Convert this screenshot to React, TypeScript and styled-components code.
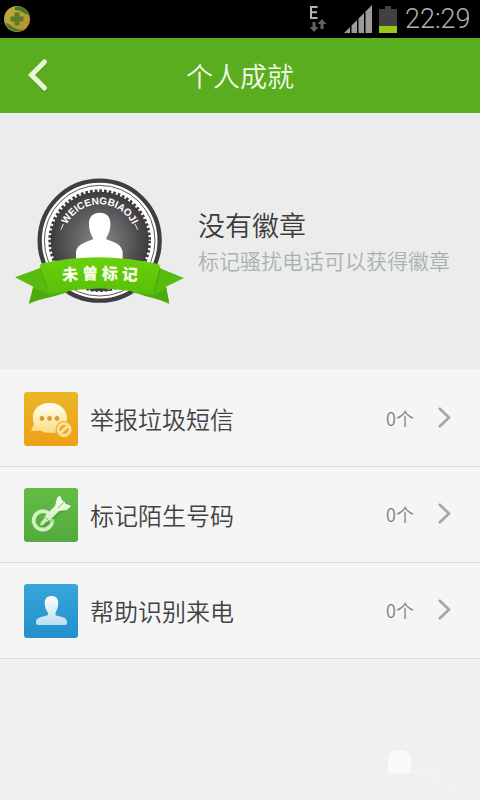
import React from "react";
import styled, { createGlobalStyle } from "styled-components";

const GlobalStyle = createGlobalStyle`
  *, *::before, *::after { box-sizing: border-box; }
  body {
    margin: 0;
    background: #f0f0f0;
    font-family: "Noto Sans CJK SC", sans-serif;
  }
  h1, h2, p, ul { margin: 0; padding: 0; font-weight: 400; }
  button, a { font: inherit; }
  svg { display: block; flex: none; }
`;

const Page = styled.div`
  min-height: 100vh;
  display: flex;
  flex-direction: column;
`;

const StatusBar = styled.div`
  height: 38px;
  padding: 0 9px 0 4px;
  display: flex;
  align-items: center;
  background: #000;
`;

const StatusIcons = styled.div`
  margin-left: auto;
  display: flex;
  align-items: center;
`;

const SignalGroup = styled.div`
  margin-left: 17px;
  display: flex;
  gap: 7px;
`;

const Clock = styled.time`
  width: 66px;
  margin-left: 8px;
  color: #b0b0b0;
  font: 300 27px/38px Roboto, sans-serif;
  white-space: nowrap;
`;

const Header = styled.header`
  height: 75px;
  padding: 0 16px;
  display: grid;
  grid-template-columns: 44px 1fr 44px;
  align-items: center;
  background: #5aad1e;
`;

const BackButton = styled.button`
  height: 44px;
  padding: 0 0 2px;
  display: flex;
  align-items: center;
  justify-content: center;
  border: 0;
  background: none;
  cursor: pointer;
`;

const Title = styled.h1`
  color: #f3fbe9;
  font-size: 27px;
  font-weight: 350;
  line-height: 40px;
  text-align: center;
`;

const Hero = styled.section`
  height: 257px;
  padding: 0 14px 2px 15px;
  display: flex;
  align-items: center;
  gap: 13px;
  background: #ececec;
`;

const HeroText = styled.div`
  flex: 1;
`;

const HeroTitle = styled.h2`
  color: #3c3c3c;
  font-size: 27px;
  font-weight: 350;
  line-height: 38px;
`;

const HeroHint = styled.p`
  color: #a9b2b3;
  font-size: 21px;
  font-weight: 350;
  line-height: 32px;
  white-space: nowrap;
`;

const List = styled.ul`
  list-style: none;
  border-top: 1px solid #fff;
`;

const Item = styled.li`
  border-bottom: 1px solid #dadada;
  background: #f5f5f5;
`;

const ItemLink = styled.a`
  height: 95px;
  padding: 0 24px;
  display: flex;
  align-items: center;
  color: #424244;
  text-decoration: none;
`;

const ItemLabel = styled.span`
  flex: 1;
  margin-left: 12px;
  font-size: 24px;
  font-weight: 350;
  line-height: 36px;
`;

const ItemCount = styled.span`
  margin-right: 23px;
  padding-bottom: 2px;
  color: #7e7e83;
  font-size: 18px;
  font-weight: 350;
  line-height: 36px;
`;

const Footer = styled.footer`
  flex: 1;
  display: flex;
  align-items: flex-end;
  justify-content: flex-end;
`;

function ShieldBall() {
  return (
    <svg width="26" height="26" viewBox="0 0 26 26" aria-hidden="true">
      <defs>
        <linearGradient id="ball" x1="0" y1="0" x2="1" y2="1">
          <stop offset="0" stopColor="#b9ad45" />
          <stop offset="1" stopColor="#c08c2c" />
        </linearGradient>
      </defs>
      <circle cx="13" cy="13" r="13" fill="url(#ball)" />
      <path d="M11 1C17-1 23 3 25 9C21 9 18 4 11 4Z" fill="#3f7a2c" />
      <path d="M2 17C7 18 11 24 19 24C11 28 3 23 2 17Z" fill="#4c7c2c" />
      <path d="M10.500 6.500h5v4h4v5h-4v4h-5v-4h-4v-5h4Z" fill="#567e27" />
    </svg>
  );
}

function NetworkIcon() {
  return (
    <svg width="17" height="28" viewBox="0 0 17 28" aria-hidden="true">
      <path d="M7.500 2H1v11h6.500M1 7.300h6" fill="none" stroke="#b5b5b5" strokeWidth="2" />
      <path d="M2.500 17h3v5h3L4 27L-.5 22h3ZM10.500 24h3v-5h3L12 14L7.500 19h3Z" fill="#626262" />
    </svg>
  );
}

function SignalIcon() {
  return (
    <svg width="28" height="28" viewBox="0 0 28 28" aria-hidden="true">
      <path
        d="M0 28L6 22V28ZM7.500 28V20.500L13 15V28ZM14.500 28V13.500L20 8V28ZM21.500 28V6.500L28 0V28Z"
        fill="#9b9b9b"
      />
    </svg>
  );
}

function BatteryIcon() {
  return (
    <svg width="18" height="28" viewBox="0 0 18 28" aria-hidden="true">
      <path d="M6 1h6v3h6v24H0V4h6Z" fill="#414141" />
      <path d="M0 21h18v7H0Z" fill="#96c51c" />
    </svg>
  );
}

function BackArrow() {
  return (
    <svg width="22" height="34" viewBox="0 0 22 34" aria-hidden="true">
      <path d="M18 6L5 18.500L18 32" fill="none" stroke="#458f18" strokeOpacity=".5" strokeWidth="5" strokeLinecap="round" />
      <path d="M17.500 4L4.500 17L17.500 30" fill="none" stroke="#e5f7d7" strokeWidth="5" strokeLinecap="round" />
    </svg>
  );
}

function Badge() {
  return (
    <svg width="170" height="126" viewBox="30 39 510 378" role="img" aria-label="未曾标记">
      <defs>
        <radialGradient id="disc" cx=".5" cy=".5" r=".5">
          <stop offset="0" stopColor="#8b898b" />
          <stop offset="1" stopColor="#3e3c3e" />
        </radialGradient>
        <linearGradient id="ribbon" x1="0" y1="0" x2="0" y2="1">
          <stop offset="0" stopColor="#68d00d" />
          <stop offset="1" stopColor="#59c006" />
        </linearGradient>
        <path id="arc" d="M174 228A110 110 0 0 1 394 228" />
        <path id="curve" d="M110 354Q284 332 460 354" />
      </defs>
      <circle cx="284" cy="227" r="180" fill="#fff" stroke="#403e42" strokeWidth="13" />
      <circle cx="284" cy="227" r="166" fill="none" stroke="#5a585b" strokeWidth="3" />
      <circle cx="284" cy="227" r="147" fill="url(#disc)" />
      <circle cx="284" cy="227" r="149" fill="none" stroke="#3e3c3e" strokeWidth="10" strokeDasharray="8 6" />
      <text fill="#fff" fontFamily="Liberation Sans, sans-serif" fontSize="30" fontWeight="700">
        <textPath href="#arc" startOffset="50%" textAnchor="middle">WEICENGBIAOJI</textPath>
      </text>
      <path d="M168 194L175 177M390 177L398 194" stroke="#eee" strokeWidth="3" />
      <path
        d="M284 143C307 143 318 158 316 181C315 202 307 212 303 221C311 229 352 231 353 263V290H213V263C215 232 257 229 265 221C260 212 253 201 252 181C250 158 262 143 284 143Z"
        fill="#fff"
      />
      <path d="M108 308L30 337L85 365L71 417Q130 392 190 382L150 325Z" fill="#58bb10" />
      <path d="M461 308L537 339L483 365L493 417Q440 393 380 382L420 325Z" fill="#58bb10" />
      <path d="M84 368L132 388L190 380L150 393L74 412Z" fill="#4cab12" />
      <path d="M484 368L446 390L385 380L420 393L492 412Z" fill="#4cab12" />
      <path d="M108 308L103 309L128 378L136 386ZM463 305L467 311L451 382L444 389Z" fill="#4cab12" />
      <path d="M112 295Q284 258 458 297Q466 299 464 306L446 382Q444 390 435 388Q284 355 143 386Q134 388 131 380L105 304Q104 297 112 295Z" fill="url(#ribbon)" />
      <path d="M252 373Q284 367 317 374L313 378H257Z" fill="#434143" />
      <text fill="#f8ffe8" fontFamily="Noto Sans CJK SC, sans-serif" fontWeight="900" fontSize="48">
        <textPath href="#curve" startOffset="50%" textAnchor="middle">未 曾 标 记</textPath>
      </text>
    </svg>
  );
}

type TileKind = "message" | "target" | "person";

const tileColors: Record<TileKind, [string, string, string]> = {
  message: ["#e9b826", "#ee9f17", "#fbdc82"],
  target: ["#62bd45", "#53aa3d", "#cbeab8"],
  person: ["#39a5dc", "#2290cc", "#b9def2"],
};

function Tile({ kind }: { kind: TileKind }) {
  const [top, bottom, tint] = tileColors[kind];
  const bg = `tile-${kind}`;
  const fg = `glyph-${kind}`;
  return (
    <svg width="54" height="54" viewBox="0 0 54 54" aria-hidden="true">
      <defs>
        <linearGradient id={bg} x1="0" y1="0" x2="0" y2="1">
          <stop offset="0" stopColor={top} />
          <stop offset="1" stopColor={bottom} />
        </linearGradient>
        <linearGradient id={fg} x1="0" y1="0" x2="0" y2="1">
          <stop offset="0" stopColor="#fffff8" />
          <stop offset="1" stopColor={tint} />
        </linearGradient>
      </defs>
      <rect width="54" height="54" rx="3" fill={`url(#${bg})`} />
      {kind === "message" && (
        <>
          <path d="M7 39L10 32C6 19 14 11 26 11C37 11 43 18 43 27C43 35 36 41 27 41Q21 41 16 38.500Z" fill={`url(#${fg})`} />
          <g fill="#d99e2c">
            <circle cx="18" cy="26.500" r="2.400" />
            <circle cx="25.500" cy="26.500" r="2.400" />
            <circle cx="33" cy="26.500" r="2.400" />
          </g>
          <circle cx="40" cy="37.500" r="8.500" fill="#edaa25" />
          <circle cx="40" cy="37.500" r="6" fill="none" stroke="#fbe09a" strokeWidth="2.800" />
          <path d="M36.500 41L43.500 34" stroke="#fbe09a" strokeWidth="3" />
        </>
      )}
      {kind === "target" && (
        <>
          <path d="M25 25.500A9.200 9.200 0 1 0 28 31" fill="none" stroke="#d5efc5" strokeWidth="3.800" />
          <path d="M16 39L19 33L31 21L35 12L39 17L47 20L37 25L25 37Z" fill="#3c8c29" fillOpacity=".3" />
          <path d="M16 37.500L17 34L20 31L21 28L31 18L33 10L36 7.500L38.500 13L41 13L41 15.500L47 18L43 22L35 23L25 33L22 34L19 37Z" fill={`url(#${fg})`} />
          <path d="M21 29L25 33M34 20L41 13" stroke="#79c35f" strokeWidth="1" />
        </>
      )}
      {kind === "person" && (
        <path
          d="M27.500 12C33 12 35 16 34 21C34 25 32 27 31.500 29V31C36 33 43 33 43 38V39Q43 41 40 41H15Q12 41 12 39V38C12 33 19 33 24 31V29C23 27 21 25 21 21C20 16 22 12 27.500 12Z"
          fill={`url(#${fg})`}
        />
      )}
    </svg>
  );
}

function Chevron() {
  return (
    <svg width="19" height="26" viewBox="0 0 19 26" aria-hidden="true">
      <path d="M2 2L12 11.500L2 21" fill="none" stroke="#a5a5a5" strokeWidth="2.600" />
    </svg>
  );
}

function FaintBell() {
  return (
    <svg width="110" height="56" viewBox="0 0 110 56" aria-hidden="true">
      <path d="M18 29V16Q18 6 29 6Q41 6 41 16V29Z" fill="#fafafa" />
      <path d="M42 28H68V46M0 12V28M75 40H86M76 46H88" fill="none" stroke="#f2f2f2" strokeWidth="3" />
    </svg>
  );
}

const items: { kind: TileKind; label: string; count: number }[] = [
  { kind: "message", label: "举报垃圾短信", count: 0 },
  { kind: "target", label: "标记陌生号码", count: 0 },
  { kind: "person", label: "帮助识别来电", count: 0 },
];

export default function App() {
  return (
    <>
      <GlobalStyle />
      <Page lang="zh-CN">
        <StatusBar>
          <ShieldBall />
          <StatusIcons>
            <NetworkIcon />
            <SignalGroup>
              <SignalIcon />
              <BatteryIcon />
            </SignalGroup>
            <Clock>22:29</Clock>
          </StatusIcons>
        </StatusBar>
        <Header>
          <BackButton type="button" aria-label="返回">
            <BackArrow />
          </BackButton>
          <Title>个人成就</Title>
        </Header>
        <main>
          <Hero>
            <Badge />
            <HeroText>
              <HeroTitle>没有徽章</HeroTitle>
              <HeroHint>标记骚扰电话可以获得徽章</HeroHint>
            </HeroText>
          </Hero>
          <List>
            {items.map((item) => (
              <Item key={item.kind}>
                <ItemLink href="#">
                  <Tile kind={item.kind} />
                  <ItemLabel>{item.label}</ItemLabel>
                  <ItemCount>{item.count}个</ItemCount>
                  <Chevron />
                </ItemLink>
              </Item>
            ))}
          </List>
        </main>
        <Footer>
          <FaintBell />
        </Footer>
      </Page>
    </>
  );
}
